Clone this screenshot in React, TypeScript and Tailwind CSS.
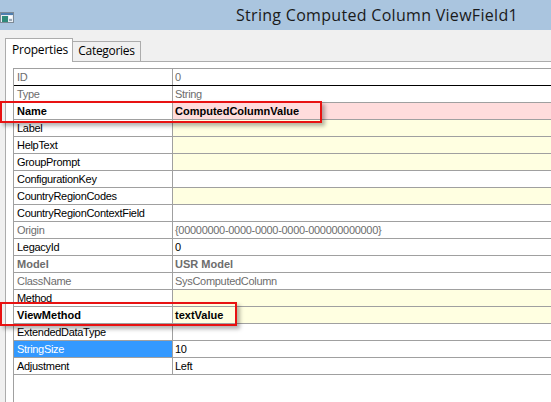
import React from "react";

type Kind = "normal" | "ro" | "bold" | "model" | "sel";

interface Row {
  label: string;
  value?: string;
  kind?: Kind;
  bg?: "yellow" | "pink";
  dark?: boolean;
}

const rows: Row[] = [
  { label: "ID", value: "0", kind: "ro", dark: true },
  { label: "Type", value: "String", kind: "ro" },
  { label: "Name", value: "ComputedColumnValue", kind: "bold", bg: "pink" },
  { label: "Label", bg: "yellow" },
  { label: "HelpText", bg: "yellow" },
  { label: "GroupPrompt", bg: "yellow" },
  { label: "ConfigurationKey" },
  { label: "CountryRegionCodes", bg: "yellow" },
  { label: "CountryRegionContextField" },
  { label: "Origin", value: "{00000000-0000-0000-0000-000000000000}", kind: "ro" },
  { label: "LegacyId", value: "0" },
  { label: "Model", value: "USR Model", kind: "model" },
  { label: "ClassName", value: "SysComputedColumn", kind: "ro" },
  { label: "Method", bg: "yellow" },
  { label: "ViewMethod", value: "textValue", kind: "bold", bg: "yellow" },
  { label: "ExtendedDataType" },
  { label: "StringSize", value: "10", kind: "sel" },
  { label: "Adjustment", value: "Left" },
];

const textClass = (kind: Kind = "normal") => {
  switch (kind) {
    case "ro":
      return "text-[#6d6d6d]";
    case "bold":
      return "text-black font-bold tracking-[0px]";
    case "model":
      return "text-[#6d6d6d] font-bold tracking-[0px]";
    default:
      return "text-black";
  }
};

const WindowIcon = () => (
  <svg width="14" height="11" viewBox="0 0 14 11" className="block">
    <rect x="0.5" y="0.5" width="13" height="10" fill="#e8eef4" stroke="#7d8a96" />
    <rect x="1" y="1" width="12" height="2" fill="#4f7fb0" />
    <rect x="2" y="4" width="6" height="6" fill="#2f8a7a" />
    <rect x="9" y="4" width="3" height="2" fill="#ffffff" />
    <rect x="9" y="7" width="3" height="2" fill="#9aa9b8" />
  </svg>
);

export default function App() {
  return (
    <div className="relative w-[551px] h-[402px] overflow-hidden bg-[#f0f0f0] font-['Liberation_Sans',Arial,sans-serif]">
      {/* Title bar */}
      <div className="flex h-[30px] items-center bg-[#aac5df]">
        <div className="w-[236px] shrink-0 pt-[4px]">
          <WindowIcon />
        </div>
        <span className="whitespace-nowrap font-['Open_Sans',sans-serif] text-[16px] tracking-[0.3px] text-[#1a1a1a]">
          String Computed Column ViewField1
        </span>
      </div>

      {/* Tabs */}
      <div className="flex items-end pl-[5px] pt-[8px] h-[31px]">
        <div className="relative z-10 -mb-px flex h-[24px] w-[68px] items-start justify-center border border-b-0 border-[#acacac] bg-white pl-[2px] pt-[2px] font-['Open_Sans',sans-serif] text-[12px] tracking-[-0.2px] text-black">
          Properties
        </div>
        <div className="flex h-[20px] w-[68px] items-start justify-center border border-l-0 border-b-0 border-[#acacac] bg-[#f0f0f0] font-['Open_Sans',sans-serif] text-[12px] tracking-[-0.3px] text-black">
          Categories
        </div>
      </div>

      {/* Tab panel */}
      <div className="ml-[5px] h-[341px] border-l border-t border-[#acacac] bg-white pl-[7px] pt-[6px]">
        <div className="h-full border-l border-t border-[#a0a0a0] text-[11px] tracking-[-0.3px]">
          {rows.map((r) => {
            const valueBg =
              r.bg === "yellow" ? "bg-[#ffffe1]" : r.bg === "pink" ? "bg-[#ffdcdc]" : "bg-white";
            return (
              <div
                key={r.label}
                className={`flex h-[17px] border-b ${r.dark ? "border-black" : "border-[#a0a0a0]"}`}
              >
                <div
                  className={`flex w-[159px] shrink-0 items-center border-r border-[#a0a0a0] pl-[3px] leading-none ${
                    r.kind === "sel" ? "bg-[#3399ff] text-white" : textClass(r.kind)
                  }`}
                >
                  {r.label}
                </div>
                <div
                  className={`flex flex-1 items-center pl-[2px] leading-none whitespace-nowrap ${valueBg} ${
                    r.kind === "sel" ? "text-black" : textClass(r.kind)
                  }`}
                >
                  {r.value}
                </div>
              </div>
            );
          })}
        </div>
      </div>

      {/* Red highlight boxes */}
      <div className="absolute left-0 top-[101px] h-[22px] w-[322px] border-2 border-[#e81212] shadow-[3px_3px_4px_rgba(0,0,0,0.3)]" />
      <div className="absolute left-0 top-[302px] h-[24px] w-[237px] border-2 border-[#e81212] shadow-[3px_3px_4px_rgba(0,0,0,0.3)]" />
    </div>
  );
}
